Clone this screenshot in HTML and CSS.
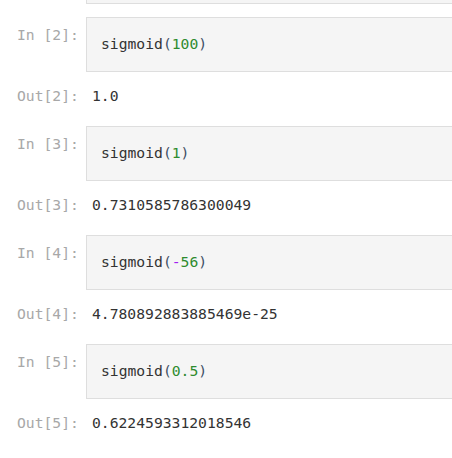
FILE: index.html
```html
<!DOCTYPE html>
<html>
<head>
<meta charset="utf-8">
<link rel="stylesheet" href="styles.css">
</head>
<body>
<div class="nb">
  <div class="cell">
    <div class="row"><div class="prompt"></div><div class="box partial"></div></div>
  </div>
  <div class="cell">
    <div class="row"><div class="prompt in">In [2]:</div><div class="box"><span class="n">sigmoid</span><span class="p">(</span><span class="num">100</span><span class="p">)</span></div></div>
    <div class="row out"><div class="prompt">Out[2]:</div><div class="result">1.0</div></div>
  </div>
  <div class="cell">
    <div class="row"><div class="prompt in">In [3]:</div><div class="box"><span class="n">sigmoid</span><span class="p">(</span><span class="num">1</span><span class="p">)</span></div></div>
    <div class="row out"><div class="prompt">Out[3]:</div><div class="result">0.7310585786300049</div></div>
  </div>
  <div class="cell">
    <div class="row"><div class="prompt in">In [4]:</div><div class="box"><span class="n">sigmoid</span><span class="p">(</span><span class="op">-</span><span class="num">56</span><span class="p">)</span></div></div>
    <div class="row out"><div class="prompt">Out[4]:</div><div class="result">4.780892883885469e-25</div></div>
  </div>
  <div class="cell">
    <div class="row"><div class="prompt in">In [5]:</div><div class="box"><span class="n">sigmoid</span><span class="p">(</span><span class="num">0.5</span><span class="p">)</span></div></div>
    <div class="row out"><div class="prompt">Out[5]:</div><div class="result">0.6224593312018546</div></div>
  </div>
</div>
</body>
</html>
```
FILE: styles.css
```css
html, body {
  margin: 0;
  padding: 0;
  background: #fff;
  overflow: hidden;
}
.nb {
  font-family: "DejaVu Sans Mono", "Liberation Mono", monospace;
  font-size: 14.7px;
  line-height: 18px;
  color: #333;
}
.cell {
  margin-bottom: 13px;
}
.row {
  display: flex;
}
.prompt {
  width: 69px;
  padding-left: 17px;
  flex: none;
  color: #a8a8a8;
  white-space: pre;
}
.prompt.in {
  padding-top: 9px;
}
.box {
  flex: 1;
  margin-right: -20px;
  background: #f5f5f5;
  border: 1px solid #dedede;
  padding: 17px 14px 18px;
  height: 18px;
  white-space: pre;
}
.box.partial {
  height: 3px;
  padding: 0;
  border-top: none;
}
.n { color: #333; }
.p { color: #3e5066; }
.num { color: #2e8b2e; }
.op { color: #a020f0; }
.out {
  padding-top: 15px;
  height: 26px;
}
.result {
  padding-left: 6px;
  color: #333;
  white-space: pre;
}
```
